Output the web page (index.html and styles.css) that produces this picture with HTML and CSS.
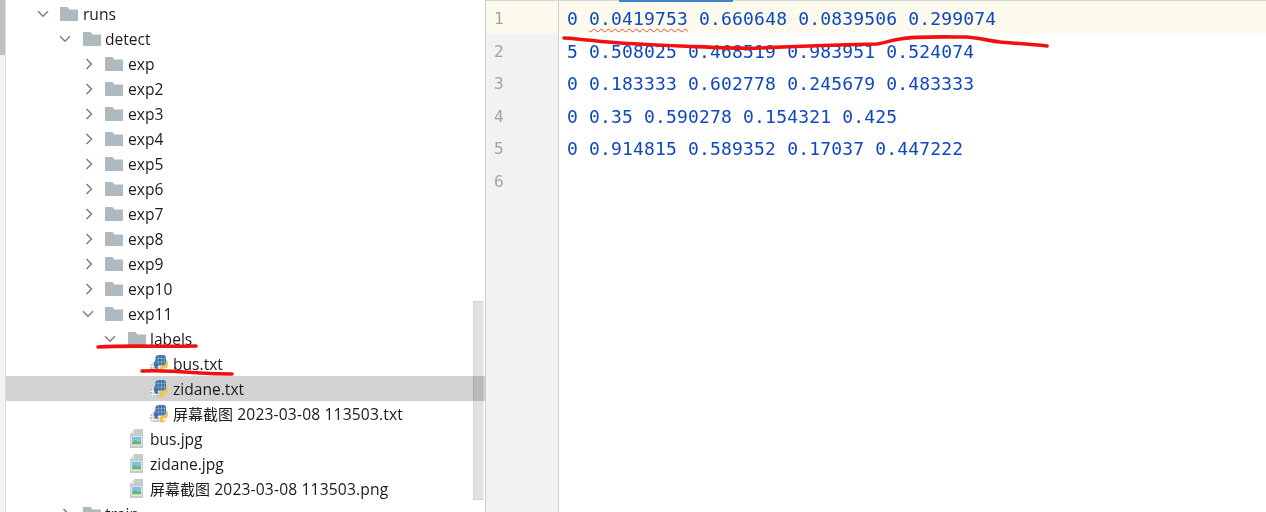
FILE: index.html
```html
<!DOCTYPE html>
<html lang="en">
<head>
<meta charset="utf-8">
<title>Project</title>
<link rel="stylesheet" href="styles.css">
</head>
<body>
<svg width="0" height="0" class="defs">
  <defs>
    <symbol id="folder" viewBox="0 0 18 16"><path d="M0 1h7.500l2 2.500H18V15H0z" fill="#aeb9c0"/></symbol>
    <symbol id="chev-d" viewBox="0 0 12 8"><path d="M1 1.200l5 5 5-5" fill="none" stroke="#7f7f7f" stroke-width="1.500"/></symbol>
    <symbol id="chev-r" viewBox="0 0 8 12"><path d="M1.500 1l5 5-5 5" fill="none" stroke="#7f7f7f" stroke-width="1.500"/></symbol>
    <symbol id="py" viewBox="0 0 18 19">
      <path d="M0 12l3-4h6v10H2l-2-3z" fill="#b9bfc5"/>
      <path d="M0 12.500h9M0 15.500h9M2.800 8v10M5.800 8v10" stroke="#f4f4f4" stroke-width="1" fill="none"/>
      <path d="M5.500 6V3Q6 1 9 1h4.500Q16 1 16 3.500V9q0 2.500-2.500 2.500H9q-1.500 0-1.500 1.500v2H6Q4 13 4 10.500 4 7 5.500 6z" fill="#3d6fa6"/>
      <path d="M8.300 1v10.500M11.500 1v10.500M14.500 1v10.500M5 4.500h11M4.500 8h11.500" stroke="#86a9cc" stroke-width=".8" fill="none"/>
      <path d="M16 6h.5Q18 7 18 10q0 4-2.500 4.500H13V16h2v.5q0 2-2 2h-2.500q-1-.5-1-2V13.500Q9.500 12.500 11 12h3q2-.5 2-2.500z" fill="#f2c64e"/>
    </symbol>
    <symbol id="img" viewBox="0 0 13 19">
      <path d="M4.500 0H13v19H0V4.500z" fill="#c3cbce"/>
      <path d="M4 .5v4H0z" fill="#e8ebec"/>
      <path d="M1.500 7.500h10v9h-10z" fill="#fff"/>
      <path d="M2 8h9v5H2z" fill="#7cc0e6"/>
      <path d="M2 15.500v-2l3-2.500 3 2 3-1v3.500z" fill="#69b56c"/>
    </symbol>
  </defs>
</svg>
<main class="window">
  <div class="edge"><div class="edge-thumb"></div></div>
  <nav class="tree">
    <div class="row l0"><svg class="chev-d"><use href="#chev-d"/></svg><svg class="ico"><use href="#folder"/></svg><span>runs</span></div>
    <div class="row l1"><svg class="chev-d"><use href="#chev-d"/></svg><svg class="ico"><use href="#folder"/></svg><span>detect</span></div>
    <div class="row l2"><svg class="chev-r"><use href="#chev-r"/></svg><svg class="ico"><use href="#folder"/></svg><span>exp</span></div>
    <div class="row l2"><svg class="chev-r"><use href="#chev-r"/></svg><svg class="ico"><use href="#folder"/></svg><span>exp2</span></div>
    <div class="row l2"><svg class="chev-r"><use href="#chev-r"/></svg><svg class="ico"><use href="#folder"/></svg><span>exp3</span></div>
    <div class="row l2"><svg class="chev-r"><use href="#chev-r"/></svg><svg class="ico"><use href="#folder"/></svg><span>exp4</span></div>
    <div class="row l2"><svg class="chev-r"><use href="#chev-r"/></svg><svg class="ico"><use href="#folder"/></svg><span>exp5</span></div>
    <div class="row l2"><svg class="chev-r"><use href="#chev-r"/></svg><svg class="ico"><use href="#folder"/></svg><span>exp6</span></div>
    <div class="row l2"><svg class="chev-r"><use href="#chev-r"/></svg><svg class="ico"><use href="#folder"/></svg><span>exp7</span></div>
    <div class="row l2"><svg class="chev-r"><use href="#chev-r"/></svg><svg class="ico"><use href="#folder"/></svg><span>exp8</span></div>
    <div class="row l2"><svg class="chev-r"><use href="#chev-r"/></svg><svg class="ico"><use href="#folder"/></svg><span>exp9</span></div>
    <div class="row l2"><svg class="chev-r"><use href="#chev-r"/></svg><svg class="ico"><use href="#folder"/></svg><span>exp10</span></div>
    <div class="row l2"><svg class="chev-d"><use href="#chev-d"/></svg><svg class="ico"><use href="#folder"/></svg><span>exp11</span></div>
    <div class="row l3"><svg class="chev-d"><use href="#chev-d"/></svg><svg class="ico"><use href="#folder"/></svg><span>labels</span></div>
    <div class="row l4"><i class="chev-gap"></i><svg class="ico ico-py"><use href="#py"/></svg><span>bus.txt</span></div>
    <div class="row l4 selected"><i class="chev-gap"></i><svg class="ico ico-py"><use href="#py"/></svg><span>zidane.txt</span></div>
    <div class="row l4"><i class="chev-gap"></i><svg class="ico ico-py"><use href="#py"/></svg><span class="stamp"><span class="cjk">屏幕截图</span> 2023-03-08 113503.txt</span></div>
    <div class="row l3"><i class="chev-gap"></i><svg class="ico ico-img"><use href="#img"/></svg><span>bus.jpg</span></div>
    <div class="row l3"><i class="chev-gap"></i><svg class="ico ico-img"><use href="#img"/></svg><span>zidane.jpg</span></div>
    <div class="row l3"><i class="chev-gap"></i><svg class="ico ico-img"><use href="#img"/></svg><span class="stamp"><span class="cjk">屏幕截图</span> 2023-03-08 113503.png</span></div>
    <div class="row l1"><svg class="chev-r"><use href="#chev-r"/></svg><svg class="ico"><use href="#folder"/></svg><span>train</span></div>
    <div class="tree-scroll"></div>
  </nav>
  <section class="editor">
    <div class="tab-mark"></div>
    <div class="line current"><div class="num">1</div><div class="code">0 <span class="typo">0.0419753</span> 0.660648 0.0839506 0.299074</div></div>
    <div class="line"><div class="num">2</div><div class="code">5 0.508025 0.468519 0.983951 0.524074</div></div>
    <div class="line"><div class="num">3</div><div class="code">0 0.183333 0.602778 0.245679 0.483333</div></div>
    <div class="line"><div class="num">4</div><div class="code">0 0.35 0.590278 0.154321 0.425</div></div>
    <div class="line"><div class="num">5</div><div class="code">0 0.914815 0.589352 0.17037 0.447222</div></div>
    <div class="line"><div class="num">6</div><div class="code"></div></div>
    <div class="line filler"><div class="num"></div><div class="code"></div></div>
  </section>
  <svg class="ink" viewBox="0 0 1266 512" width="1266" height="512">
    <path d="M564 38 C585 39 600 42 620 43 S655 45 680 46 S740 49 760 48 S830 45 877 44 C886 43 890 40 900 39 C915 36 950 37 967 37 C980 38 990 41 1000 42 S1030 44 1047 46"/>
    <path d="M98 347 C130 345 165 347 196 346"/>
    <path d="M142 371 C165 370 185 372 200 373 S220 374 232 374"/>
  </svg>
</main>
</body>
</html>
```
FILE: styles.css
```css
* { box-sizing: border-box; }
html, body { margin: 0; height: 100%; overflow: hidden; background: #fff; }
.defs { position: absolute; }
.window { display: flex; height: 512px; position: relative; overflow: hidden; }

.edge { width: 6px; flex: none; background: #f2f2f2; border-right: 1px solid #dedede; }
.edge-thumb { height: 55px; background: #bfbfbf; }

.tree {
  width: 479px; flex: none; padding-top: 1px; position: relative; overflow: hidden;
  font: 15.6px/25px "Open Sans", "Noto Sans CJK SC", sans-serif; color: #1b1b1b;
}
.row { display: flex; align-items: center; height: 25px; white-space: nowrap; }
.row > span { margin-left: 5px; position: relative; top: 1px; }
.row > .stamp { letter-spacing: .17px; }
.cjk { font-size: 15px; letter-spacing: 0; }
.l0 { padding-left: 31px; }
.l1 { padding-left: 53px; }
.l2 { padding-left: 76px; }
.l3 { padding-left: 98px; }
.l4 { padding-left: 121px; }
.l1 .ico, .l3 .ico { margin: 0 -1px 0 1px; }
.selected { background: #d2d2d2; }
.chev-d, .chev-r, .chev-gap { flex: none; display: block; }
.chev-d { width: 12px; height: 8px; margin-right: 11px; }
.chev-r { width: 8px; height: 12px; margin: 0 12px 0 3px; }
.chev-gap { width: 23px; }
.ico { width: 18px; height: 16px; flex: none; display: block; }
.ico-py { height: 19px; }
.l3 .ico.ico-img { width: 13px; height: 19px; margin: 0 2px 0 3px; }
.row > .ico-img + span { margin-left: 5px; }
.tree-scroll {
  position: absolute; left: 467px; top: 301px; width: 11px; height: 199px;
  background: #e2e2e2; border: 1px solid #d4d4d4; border-right-color: #f0f0f0;
  mix-blend-mode: multiply;
}

.editor {
  flex: 1; position: relative; padding-top: 2px; border-top: 1px solid #d6d6d6;
  border-left: 1px solid #d0d0d0; display: flex; flex-direction: column;
  font-family: "DejaVu Sans Mono", monospace;
}
.tab-mark { position: absolute; left: 133px; top: -1px; width: 114px; height: 2px; background: #4083c9; }
.line { display: flex; height: 32.5px; flex: none; }
.line.filler { flex: 1; }
.line.current {
  margin-top: -2px; height: 34.5px; padding-top: 2px;
  background: linear-gradient(#fcfaed 32.5px, #fff 32.5px);
}
.num {
  width: 73px; flex: none; background: #f2f2f2; border-right: 1px solid #d0d0d0;
  padding-left: 8px; color: #a3a3a3; font-size: 16px; line-height: 32.5px;
}
.current .num {
  margin-top: -2px; padding-top: 2px;
  background: linear-gradient(#fcfaed 32.5px, #f2f2f2 32.5px);
}
.code {
  padding-left: 8px; color: #0f47bd; font-size: 18px; letter-spacing: .17px;
  line-height: 32.5px; white-space: pre;
}
.typo { text-decoration: underline wavy #f04a4a 1px; text-underline-offset: 3px; }

.ink { position: absolute; left: 0; top: 0; pointer-events: none; fill: none; stroke: #f01010; stroke-width: 3.6; stroke-linecap: round; }
```
